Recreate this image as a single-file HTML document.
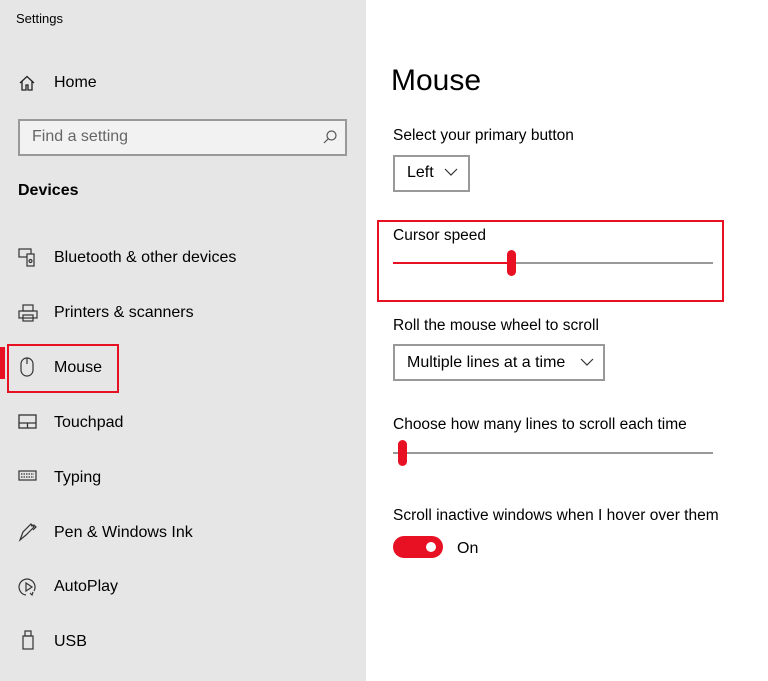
<!DOCTYPE html><html><head><style>
body{margin:0;width:768px;height:681px;position:relative;font-family:"Liberation Sans",sans-serif;color:#000;background:#fff;overflow:hidden}
.side{position:absolute;left:0;top:0;width:366px;height:681px;background:#e6e6e6}
.a{position:absolute;white-space:nowrap}
.it{position:absolute;left:54px;font-size:16px}
.ic{position:absolute;left:18px}
.t{font-size:15.5px;position:absolute;left:393px}
.track{position:absolute;height:2px;background:#999}
</style></head><body>
<div class="side">
<div class="a" style="left:16px;top:11px;font-size:13px">Settings</div>
<svg class="ic" style="top:74px" width="18" height="18" viewBox="0 0 18 18" fill="none" stroke="#222" stroke-width="1.3"><path d="M2 9L9 2.5 16 9M4 7.5V16h4v-5h2v5h4V7.5"/></svg>
<div class="it" style="top:74px">Home</div>
<div class="a" style="left:18px;top:119px;width:325px;height:33px;border:2px solid #999;background:#f2f2f2"></div>
<div class="a" style="left:32px;top:128px;font-size:16px;color:#666">Find a setting</div>
<svg class="a" style="left:322px;top:129px" width="16" height="16" viewBox="0 0 16 16" fill="none" stroke="#555" stroke-width="1.2"><circle cx="9.5" cy="6.5" r="4.5"/><path d="M6.3 9.7L2 14"/></svg>
<div class="a" style="left:18px;top:182px;font-size:16px;font-weight:bold">Devices</div>
<svg class="ic" style="top:248px" width="20" height="20" viewBox="0 0 20 20" fill="none" stroke="#333" stroke-width="1.2"><rect x="1" y="1" width="12" height="8"/><rect x="9" y="6" width="7" height="12" fill="#e6e6e6"/><circle cx="12.5" cy="13" r="1.5"/></svg>
<div class="it" style="top:249px">Bluetooth &amp; other devices</div>
<svg class="ic" style="top:303px" width="20" height="20" viewBox="0 0 20 20" fill="none" stroke="#333" stroke-width="1.2"><rect x="5" y="2" width="10" height="6"/><rect x="1" y="8" width="18" height="7"/><rect x="5" y="12" width="10" height="6"/></svg>
<div class="it" style="top:304px">Printers &amp; scanners</div>
<div class="a" style="left:0;top:347px;width:5px;height:32px;background:#e81123"></div>
<div class="a" style="left:7px;top:344px;width:108px;height:45px;border:2px solid #e81123"></div>
<svg class="ic" style="top:357px;left:20px" width="14" height="20" viewBox="0 0 14 20" fill="none" stroke="#333" stroke-width="1.2"><rect x="1" y="1" width="12" height="18" rx="6"/><path d="M7 1v6"/></svg>
<div class="it" style="top:359px">Mouse</div>
<svg class="ic" style="top:414px" width="20" height="16" viewBox="0 0 20 16" fill="none" stroke="#333" stroke-width="1.3"><rect x="1" y="1" width="17" height="13"/><path d="M1 9h17M9.5 9v5"/></svg>
<div class="it" style="top:414px">Touchpad</div>
<svg class="ic" style="top:470px" width="20" height="12" viewBox="0 0 20 12" fill="none" stroke="#333" stroke-width="1.2"><rect x="1" y="1" width="17" height="9"/><path d="M3 4h13M3 7h13" stroke-dasharray="1.5 1"/></svg>
<div class="it" style="top:469px">Typing</div>
<svg class="ic" style="top:522px" width="20" height="20" viewBox="0 0 20 20" fill="none" stroke="#333" stroke-width="1.2"><path d="M2 18l3-8 8-8 3 3-8 8z M13 4l3-1 2 2-3 3"/></svg>
<div class="it" style="top:524px">Pen &amp; Windows Ink</div>
<svg class="ic" style="top:577px" width="20" height="20" viewBox="0 0 20 20" fill="none" stroke="#333" stroke-width="1.2"><path d="M8 18A8 8 0 1 1 16 14"/><path d="M8 6v8l6-4z"/><path d="M12 16l2 2 1-3"/></svg>
<div class="it" style="top:578px">AutoPlay</div>
<svg class="ic" style="top:630px;left:22px" width="12" height="20" viewBox="0 0 12 20" fill="none" stroke="#333" stroke-width="1.2"><rect x="3" y="1" width="6" height="5"/><rect x="1" y="6" width="10" height="13"/></svg>
<div class="it" style="top:633px">USB</div>
</div>

<div class="a" style="left:391px;top:64px;font-size:30px">Mouse</div>
<div class="t" style="top:127px">Select your primary button</div>
<div class="a" style="left:393px;top:155px;width:73px;height:33px;border:2px solid #999"></div>
<div class="a" style="left:407px;top:164px;font-size:16px">Left</div>
<svg class="a" style="left:444px;top:168px" width="14" height="8" viewBox="0 0 14 8" fill="none" stroke="#333" stroke-width="1.2"><path d="M1 1l6 6 6-6"/></svg>
<div class="a" style="left:377px;top:220px;width:343px;height:78px;border:2px solid #e81123"></div>
<div class="t" style="top:227px">Cursor speed</div>
<div class="track" style="left:393px;top:262px;width:320px"></div>
<div class="track" style="left:393px;top:262px;width:115px;background:#e81123"></div>
<div class="a" style="left:507px;top:250px;width:9px;height:26px;border-radius:5px;background:#e81123"></div>
<div class="t" style="top:317px">Roll the mouse wheel to scroll</div>
<div class="a" style="left:393px;top:344px;width:208px;height:33px;border:2px solid #999"></div>
<div class="a" style="left:407px;top:354px;font-size:16px">Multiple lines at a time</div>
<svg class="a" style="left:580px;top:358px" width="14" height="8" viewBox="0 0 14 8" fill="none" stroke="#333" stroke-width="1.2"><path d="M1 1l6 6 6-6"/></svg>
<div class="t" style="top:416px">Choose how many lines to scroll each time</div>
<div class="track" style="left:393px;top:452px;width:320px"></div>
<div class="a" style="left:398px;top:440px;width:9px;height:26px;border-radius:5px;background:#e81123"></div>
<div class="t" style="top:507px">Scroll inactive windows when I hover over them</div>
<div class="a" style="left:393px;top:536px;width:50px;height:22px;border-radius:11px;background:#e81123"></div>
<div class="a" style="left:426px;top:542px;width:10px;height:10px;border-radius:5px;background:#fff"></div>
<div class="a" style="left:457px;top:540px;font-size:16px">On</div>
</body></html>
